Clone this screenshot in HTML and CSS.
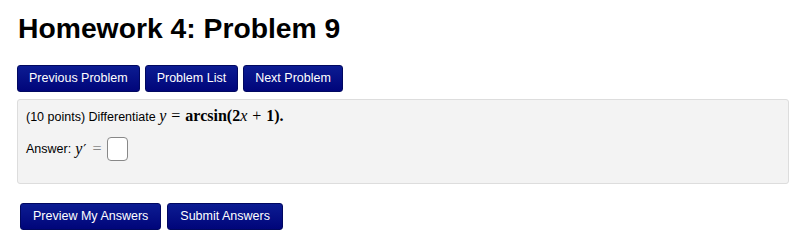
FILE: index.html
```html
<!DOCTYPE html>
<html lang="en">
<head>
    <title>Homework 4: Problem 9</title>
    <link rel="stylesheet" href="styles.css">
</head>
<body>
    <div class="page">
        <h1>Homework 4: Problem 9</h1>

        <div class="nav">
            <a class="button" href="#">Previous Problem</a>
            <a class="button" href="#">Problem List</a>
            <a class="button" href="#">Next Problem</a>
        </div>

        <div class="problem">
            <p class="statement">
                (10 points) Differentiate
                <span class="math"><i>y</i> <span class="op">=</span> <b>arcsin</b><b>(2</b><i>x</i> <span class="op">+</span> <b>1).</b></span>
            </p>
            <p class="answer">
                Answer:
                <span class="math"><i>y</i><span class="prime">&prime;</span> <span class="op eq">=</span></span>
                <input type="text" class="answer-box">
            </p>
        </div>

        <div class="submit">
            <button class="button" type="button">Preview My Answers</button>
            <button class="button" type="button">Submit Answers</button>
        </div>
    </div>
</body>
</html>
```

FILE: styles.css
```css
body {
    margin: 0;
    padding: 0;
    background-color: #fff;
    font-family: "Liberation Sans", Arial, sans-serif;
    color: #000;
}

.page {
    padding: 0 12px 0 17px;
}

h1 {
    margin: 11px 0 0 1px;
    font-size: 28.3px;
    line-height: 34px;
    font-weight: bold;
}

.nav {
    display: flex;
    gap: 5px;
    margin-top: 20px;
}

.button {
    display: inline-block;
    box-sizing: border-box;
    height: 27px;
    padding: 0 11px;
    line-height: 25px;
    font-family: "Liberation Sans", Arial, sans-serif;
    font-size: 12.5px;
    color: #fff;
    text-decoration: none;
    background: linear-gradient(#0c1c92, #00057a);
    border: 1px solid #010860;
    border-radius: 3px;
    cursor: pointer;
}

.problem {
    margin-top: 7px;
    height: 85px;
    box-sizing: border-box;
    padding: 6px 8px;
    background-color: #f3f3f3;
    border: 1px solid #dddddd;
    border-radius: 3px;
}

.problem p {
    margin: 0;
    font-size: 12.5px;
}

.statement {
    line-height: 20px;
}

.answer {
    display: flex;
    align-items: center;
    margin-top: 10px !important;
    height: 24px;
}

.math {
    font-family: "Liberation Serif", "DejaVu Serif", serif;
    font-size: 16px;
    white-space: nowrap;
}

.math i {
    font-style: italic;
}

.math b {
    font-weight: bold;
}

.math .op {
    color: #000;
    padding: 0 1px;
}

.answer .math {
    margin-left: 4px;
}

.prime {
    font-family: "DejaVu Sans", sans-serif;
    font-size: 14px;
    margin-left: 1px;
}

.eq {
    color: #888 !important;
    margin-left: 1px;
}

.answer-box {
    box-sizing: border-box;
    width: 21px;
    height: 24px;
    margin: 0 0 0 5px;
    padding: 0;
    border: 1px solid #888;
    border-radius: 4px;
    background-color: #fff;
}

.submit {
    display: flex;
    gap: 6px;
    margin: 19px 0 0 3px;
}

.submit .button {
    padding: 0 12px;
}
```
